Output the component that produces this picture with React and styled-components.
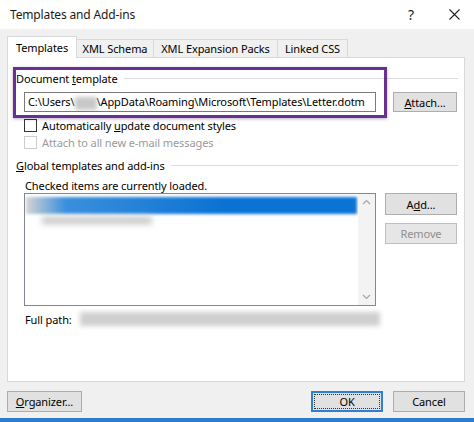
import React from "react";
import styled, { createGlobalStyle, css } from "styled-components";

const Global = createGlobalStyle`
  html, body { margin: 0; padding: 0; }
  body {
    width: 474px; height: 422px; overflow: hidden;
    background: #f0f0f0;
    font-family: "Noto Sans", "Open Sans", sans-serif;
    font-size: 11px; letter-spacing: -0.1px; color: #000;
  }
  * { box-sizing: border-box; }
`;

const Window = styled.div`
  width: 474px; height: 422px;
  display: flex; flex-direction: column;
  background: #f0f0f0;
`;

const TitleBar = styled.div`
  height: 29px; flex: none;
  background: #fff;
  display: flex; align-items: center;
  padding: 0 14px 0 10px;
`;

const Title = styled.div`
  flex: 1;
  font-size: 12px;
  letter-spacing: -0.15px;
  color: #1a1a1a;
`;

const Help = styled.div`
  font-size: 14px; color: #222;
  margin-right: 35px;
`;

const Body = styled.div`
  flex: 1;
  display: flex; flex-direction: column;
  padding: 7px 9px 0 7px;
`;

const TabStrip = styled.div`
  height: 21px;
  display: flex; align-items: flex-end;
  position: relative; z-index: 1;
`;

const Tab = styled.div`
  width: ${p => p.$w}px;
  height: ${p => (p.$active ? 22 : 18)}px;
  display: flex; align-items: center; justify-content: center;
  border: 1px solid #d9d9d9;
  border-bottom: none;
  margin-left: ${p => (p.$first ? 0 : -1)}px;
  background: ${p => (p.$active ? "#fff" : "#f0f0f0")};
  margin-bottom: ${p => (p.$active ? -1 : 0)}px;
  white-space: nowrap;
`;

const Panel = styled.div`
  height: 325px;
  background: #fff;
  border: 1px solid #d9d9d9;
  position: relative;
  padding: 12px 6px 0 8px;
  display: flex; flex-direction: column;
`;

const Highlight = styled.div`
  position: absolute;
  left: 5px; top: 9px;
  width: 374px; height: 51px;
  border: 3px solid #68318f;
  box-shadow: 0 1px 3px rgba(60, 30, 90, 0.35);
  pointer-events: none;
`;

const GroupLabel = styled.div`
  display: flex; align-items: center; gap: 6px;
  height: 16px;
  margin-top: ${p => p.$mt || 0}px;
  white-space: nowrap;
  &::after {
    content: ""; flex: 1; height: 1px; background: #dcdcdc;
  }
`;

const Indent = styled.div`
  padding-left: 8px;
  margin-top: ${p => p.$mt || 0}px;
  display: flex; flex-direction: column;
`;

const Row = styled.div`
  display: flex; align-items: ${p => p.$align || "center"};
  gap: ${p => p.$gap || 0}px;
`;

const TextInput = styled.div`
  width: 352px; height: 20px;
  border: 1px solid #7a7a7a;
  line-height: 18px;
  padding-left: 3px;
  white-space: nowrap; overflow: hidden;
`;

const Blur = styled.span`
  display: inline-block;
  flex: none;
  width: ${p => p.$w}px; height: ${p => p.$h}px;
  background: ${p => p.$bg || "#c8c8c8"};
  filter: blur(${p => p.$blur || 2}px);
  vertical-align: middle;
`;

const Button = styled.div`
  width: ${p => p.$w || 64}px; height: ${p => p.$h || 20}px;
  margin-left: ${p => p.$ml || 0}px;
  margin-top: ${p => p.$mt || 0}px;
  display: flex; align-items: center; justify-content: center;
  background: #e1e1e1;
  border: 1px solid #adadad;
  color: ${p => (p.$disabled ? "#8f8f8f" : "#000")};
  ${p => p.$disabled && css`border-color: #bfbfbf; background: #e6e6e6;`}
  ${p => p.$default && css`
    border: 2px solid #2f80d3;
    position: relative;
    &::before {
      content: ""; position: absolute; inset: 1px;
      border: 1px dotted #333;
    }
  `}
`;

const CheckRow = styled.div`
  display: flex; align-items: center; gap: 5px;
  height: 16px;
  margin-top: ${p => p.$mt || 0}px;
  color: ${p => (p.$disabled ? "#9a9a9a" : "#000")};
`;

const Box = styled.span`
  width: 13px; height: 13px;
  border: 1px solid ${p => (p.$disabled ? "#cccccc" : "#333")};
  background: #fff;
  flex: none;
`;

const Note = styled.div`
  height: 16px; display: flex; align-items: center;
  padding-left: 1px;
`;

const ListBox = styled.div`
  width: 352px; height: 113px;
  border: 1px solid #828790;
  display: flex;
`;

const ListItems = styled.div`
  flex: 1; padding: 1px;
  display: flex; flex-direction: column;
  overflow: hidden;
`;

const Selected = styled.div`
  height: 17px;
  background: linear-gradient(90deg, #d4d4d4 0%, #3a8fdd 12%, #0a72d2 60%, #0a74d4 100%);
  filter: blur(1.5px);
  margin-top: 2px;
`;

const Scroll = styled.div`
  width: 17px;
  background: #f3f3f3;
  display: flex; flex-direction: column; justify-content: space-between; align-items: center;
  padding: 5px 0;
`;

const RightButtons = styled.div`
  display: flex; flex-direction: column;
  margin-left: 9px;
`;

const Footer = styled.div`
  display: flex; align-items: center;
  margin-top: 9px;
  height: 21px;
`;

const Spacer = styled.div` flex: 1; `;

const BottomStrip = styled.div`
  height: 4px; flex: none;
  background: #2c7bd3;
`;

const Chevron = ({ up }) => (
  <svg width="9" height="6" viewBox="0 0 9 6">
    <polyline
      points={up ? "1,5 4.5,1.5 8,5" : "1,1 4.5,4.5 8,1"}
      fill="none" stroke="#a6a6a6" strokeWidth="1.2"
    />
  </svg>
);

export default function App() {
  return (
    <>
      <Global />
      <Window>
        <TitleBar>
          <Title>Templates and Add-ins</Title>
          <Help>?</Help>
          <svg width="11" height="11" viewBox="0 0 11 11">
            <path d="M0.5 0.5 L10.5 10.5 M10.5 0.5 L0.5 10.5" stroke="#222" strokeWidth="1.1" />
          </svg>
        </TitleBar>
        <Body>
          <TabStrip>
            <Tab $active $first $w={70}>Templates</Tab>
            <Tab $w={78}>XML Schema</Tab>
            <Tab $w={125}>XML Expansion Packs</Tab>
            <Tab $w={71}>Linked CSS</Tab>
          </TabStrip>
          <Panel>
            <GroupLabel><span>Document <u>t</u>emplate</span></GroupLabel>
            <Indent $mt={6}>
              <Row $gap={17}>
                <TextInput>
                  C:\Users\<Blur $w={22} $h={13} />\AppData\Roaming\Microsoft\Templates\Letter.dotm
                </TextInput>
                <Button $w={64}><span><u>A</u>ttach...</span></Button>
              </Row>
              <CheckRow $mt={5}><Box /><span>Automatically <u>u</u>pdate document styles</span></CheckRow>
              <CheckRow $mt={1} $disabled><Box $disabled /><span>Attach to all new e-mail messages</span></CheckRow>
            </Indent>
            <GroupLabel $mt={7}><span><u>G</u>lobal templates and add-ins</span></GroupLabel>
            <Indent $mt={4}>
              <Note>Checked items are currently loaded.</Note>
              <Row $align="flex-start">
                <ListBox>
                  <ListItems>
                    <Selected />
                    <Row>
                      <Blur $w={110} $h={7} $bg="#c4c4c4" $blur={3} style={{ marginLeft: 16, marginTop: 3 }} />
                    </Row>
                  </ListItems>
                  <Scroll>
                    <Chevron up />
                    <Chevron />
                  </Scroll>
                </ListBox>
                <RightButtons>
                  <Button $w={72} $h={22}><span>A<u>d</u>d...</span></Button>
                  <Button $w={72} $h={21} $mt={8} $disabled>Remove</Button>
                </RightButtons>
              </Row>
              <Row $gap={8} style={{ marginTop: 5 }}>
                <Note>Full path:</Note>
                <Blur $w={300} $h={14} $bg="#cfcfcf" $blur={2.5} />
              </Row>
            </Indent>
            <Highlight />
          </Panel>
          <Footer>
            <Button $w={75} $h={21}><span><u>O</u>rganizer...</span></Button>
            <Spacer />
            <Button $w={72} $h={21} $default>OK</Button>
            <Button $w={72} $h={21} $ml={10}>Cancel</Button>
          </Footer>
          <Spacer />
        </Body>
        <BottomStrip />
      </Window>
    </>
  );
}
